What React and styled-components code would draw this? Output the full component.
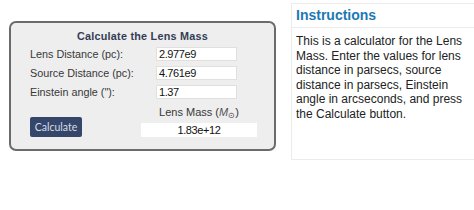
import React from "react";
import styled, { createGlobalStyle } from "styled-components";

const GlobalStyle = createGlobalStyle`
  body {
    margin: 0;
    background: #ffffff;
    font-family: "Liberation Sans", Arial, sans-serif;
  }
`;

const Page = styled.div`
  display: flex;
  align-items: flex-start;
  width: 474px;
  height: 210px;
  overflow: hidden;
  padding: 3px 0 0 9px;
  box-sizing: border-box;
`;

const Calculator = styled.div`
  flex-shrink: 0;
  margin-top: 18px;
  width: 267px;
  height: 130px;
  box-sizing: border-box;
  border: 2px solid #6b6b6b;
  border-radius: 7px;
  background: #eeeeee;
  padding: 6px 0 0 19px;
`;

const Title = styled.div`
  font-weight: bold;
  font-size: 10.8px;
  color: #333d55;
  text-align: center;
  padding-right: 19px;
  letter-spacing: 0.25px;
  line-height: 15px;
`;

const Row = styled.div`
  display: flex;
  align-items: center;
  height: 19px;
`;

const Label = styled.label`
  width: 126px;
  font-size: 10.8px;
  color: #383838;
`;

const Input = styled.input`
  width: 81px;
  height: 14px;
  box-sizing: border-box;
  border: 1px solid #e0e0e0;
  background: #ffffff;
  padding: 0 2px;
  font-family: "Liberation Sans", Arial, sans-serif;
  font-size: 11px;
  letter-spacing: -0.4px;
  color: #111;
  outline: none;
`;

const Footer = styled.div`
  display: flex;
  align-items: flex-end;
  margin-top: 5px;
`;

const Button = styled.button`
  width: 52px;
  height: 20px;
  border: none;
  border-radius: 2px;
  background: #34466a;
  color: #d9dde6;
  font-family: Lato, "Open Sans", sans-serif;
  font-size: 10.5px;
  padding: 0;
`;

const Result = styled.div`
  display: flex;
  flex-direction: column;
  align-items: center;
  margin-left: 59px;
  width: 116px;
`;

const ResultLabel = styled.div`
  font-size: 11px;
  color: #383838;
  line-height: 13px;
  margin-bottom: 1px;
  i {
    color: #555;
  }
  sub {
    font-size: 8px;
    vertical-align: -2px;
  }
`;

const ResultValue = styled.div`
  width: 116px;
  height: 14px;
  background: #ffffff;
  text-align: center;
  font-size: 11px;
  letter-spacing: -0.4px;
  line-height: 14px;
  color: #111;
`;

const Instructions = styled.div`
  flex-shrink: 0;
  margin-left: 15px;
  width: 190px;
  height: 157px;
  box-sizing: border-box;
  border: 1px solid #ececec;
  background: #ffffff;
`;

const InstrHeading = styled.div`
  font-size: 14px;
  font-weight: bold;
  color: #1d78b3;
  padding: 3px 0 0 4px;
  height: 20px;
  border-bottom: 1px solid #ececec;
`;

const InstrBody = styled.p`
  margin: 0;
  padding: 6px 0 0 4px;
  font-size: 12px;
  line-height: 14.6px;
  color: #222;
`;

export default function App() {
  return (
    <>
      <GlobalStyle />
      <Page>
        <Calculator>
          <Title>Calculate the Lens Mass</Title>
          <Row>
            <Label>Lens Distance (pc):</Label>
            <Input defaultValue="2.977e9" />
          </Row>
          <Row>
            <Label>Source Distance (pc):</Label>
            <Input defaultValue="4.761e9" />
          </Row>
          <Row>
            <Label>Einstein angle ("):</Label>
            <Input defaultValue="1.37" />
          </Row>
          <Footer>
            <Button>Calculate</Button>
            <Result>
              <ResultLabel>
                Lens Mass (<i>M</i>
                <sub>⊙</sub>)
              </ResultLabel>
              <ResultValue>1.83e+12</ResultValue>
            </Result>
          </Footer>
        </Calculator>
        <Instructions>
          <InstrHeading>Instructions</InstrHeading>
          <InstrBody>
            This is a calculator for the Lens
            <br />
            Mass. Enter the values for lens
            <br />
            distance in parsecs, source
            <br />
            distance in parsecs, Einstein
            <br />
            angle in arcseconds, and press
            <br />
            the Calculate button.
          </InstrBody>
        </Instructions>
      </Page>
    </>
  );
}
